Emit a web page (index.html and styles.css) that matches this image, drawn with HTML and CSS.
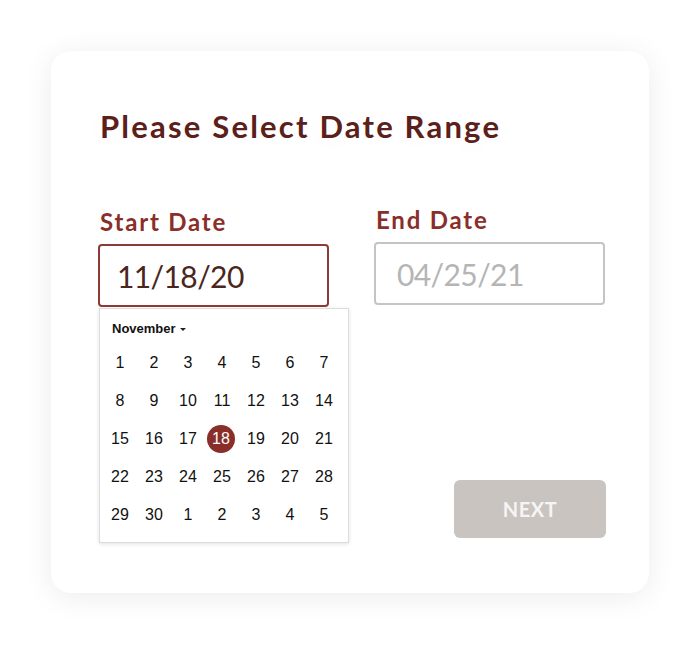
FILE: index.html
```html
<!DOCTYPE html>
<html>
<head>
<meta charset="utf-8">
<link rel="stylesheet" href="styles.css">
</head>
<body>
<div class="card">
  <h1 class="title">Please Select Date Range</h1>
  <div class="fields">
    <div class="field">
      <label class="label">Start Date</label>
      <div class="input input-active">11/18/20</div>
      <div class="calendar">
        <div class="cal-head">November <span class="caret"></span></div>
        <div class="cal-grid">
          <span>1</span><span>2</span><span>3</span><span>4</span><span>5</span><span>6</span><span>7</span>
          <span>8</span><span>9</span><span>10</span><span>11</span><span>12</span><span>13</span><span>14</span>
          <span>15</span><span>16</span><span>17</span><span><b class="sel">18</b></span><span>19</span><span>20</span><span>21</span>
          <span>22</span><span>23</span><span>24</span><span>25</span><span>26</span><span>27</span><span>28</span>
          <span>29</span><span>30</span><span>1</span><span>2</span><span>3</span><span>4</span><span>5</span>
        </div>
      </div>
    </div>
    <div class="field field-end">
      <label class="label">End Date</label>
      <div class="input input-idle">04/25/21</div>
    </div>
  </div>
  <div class="footer">
    <button class="next">NEXT</button>
  </div>
</div>
</body>
</html>
```

FILE: styles.css
```css
html, body {
  margin: 0;
  padding: 0;
  background: #ffffff;
}
body {
  width: 700px;
  height: 645px;
  font-family: "Lato", "Open Sans", sans-serif;
}
.card {
  box-sizing: border-box;
  margin: 51px 0 0 51px;
  width: 598px;
  height: 542px;
  background: #ffffff;
  border-radius: 20px;
  box-shadow: 0 4px 30px rgba(0, 0, 0, 0.08);
  padding: 57px 43px 55px 47px;
  display: flex;
  flex-direction: column;
}
.title {
  margin: 0 0 0 2px;
  font-size: 31px;
  line-height: 36px;
  font-weight: 700;
  color: #5a2019;
  letter-spacing: 2.2px;
  text-shadow: 0 4px 30px rgba(0, 0, 0, 0.05);
}
.fields {
  margin-top: 63px;
  display: flex;
  gap: 45px;
  align-items: flex-start;
}
.field {
  position: relative;
  width: 231px;
  display: flex;
  flex-direction: column;
}
.field-end {
  margin-top: -2px;
}
.label {
  display: block;
  margin-left: 2px;
  font-size: 24px;
  line-height: 29px;
  font-weight: 700;
  color: #8a2e29;
  letter-spacing: 1.8px;
  text-shadow: 0 4px 30px rgba(0, 0, 0, 0.05);
}
.input {
  box-sizing: border-box;
  margin-top: 8px;
  height: 63px;
  border-radius: 4px;
  border: 2px solid #c4c4c4;
  display: flex;
  align-items: center;
  padding-left: 17px;
  font-size: 30px;
  font-weight: 400;
  letter-spacing: -0.6px;
}
.input-active {
  border-color: #8e3a35;
  color: #4a2620;
}
.input-idle {
  color: #b5b5b5;
  padding-left: 21px;
}
.calendar {
  position: absolute;
  top: calc(100% + 1px);
  left: 1px;
  box-sizing: border-box;
  width: 250px;
  background: #ffffff;
  border: 1px solid #dcdcdc;
  box-shadow: 0 1px 4px rgba(0, 0, 0, 0.12);
  padding: 10px 7px 8px 3px;
  font-family: "Liberation Sans", Arial, sans-serif;
  color: #111111;
  z-index: 2;
}
.cal-head {
  padding-left: 9px;
  font-size: 13px;
  line-height: 20px;
  font-weight: 700;
  display: flex;
  align-items: center;
  gap: 4px;
}
.caret {
  width: 0;
  height: 0;
  border-left: 3px solid transparent;
  border-right: 3px solid transparent;
  border-top: 3px solid #222;
  margin-top: 1px;
}
.cal-grid {
  margin-top: 5px;
  display: grid;
  grid-template-columns: repeat(7, 34px);
  grid-auto-rows: 38px;
  font-size: 16px;
}
.cal-grid span {
  display: flex;
  align-items: center;
  justify-content: center;
}
.sel {
  display: flex;
  align-items: center;
  justify-content: center;
  width: 28px;
  height: 28px;
  border-radius: 50%;
  background: #8a2e29;
  color: #ffffff;
  font-weight: 400;
  margin-left: -2px;
}
.footer {
  margin-top: auto;
  display: flex;
  justify-content: flex-end;
}
.next {
  width: 152px;
  height: 58px;
  border: none;
  border-radius: 6px;
  background: #c9c4c0;
  color: #f7f5f4;
  font-family: "Lato", sans-serif;
  font-size: 20px;
  font-weight: 700;
  letter-spacing: 0.5px;
  padding: 0;
}
```
